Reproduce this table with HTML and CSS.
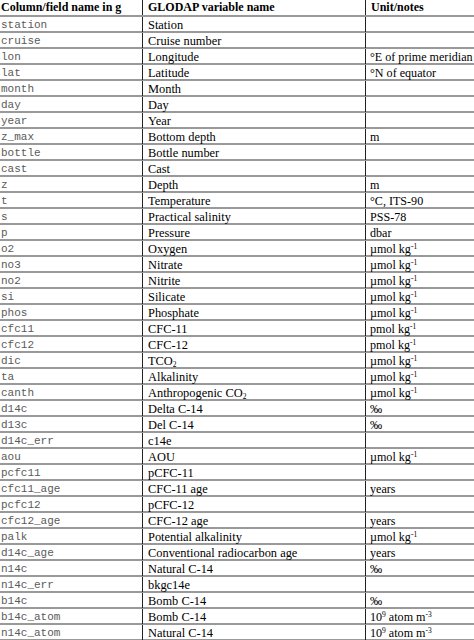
FILE: index.html
```html
<!DOCTYPE html>
<html>
<head>
<meta charset="utf-8">
<link rel="stylesheet" href="styles.css">
</head>
<body>
<div class="table">
  <div class="row head"><div class="c1">Column/field name in g</div><div class="c2">GLODAP variable name</div><div class="c3">Unit/notes</div></div>
  <div class="row"><div class="c1">station</div><div class="c2">Station</div><div class="c3"></div></div>
  <div class="row"><div class="c1">cruise</div><div class="c2">Cruise number</div><div class="c3"></div></div>
  <div class="row"><div class="c1">lon</div><div class="c2">Longitude</div><div class="c3">°E of prime meridian</div></div>
  <div class="row"><div class="c1">lat</div><div class="c2">Latitude</div><div class="c3">°N of equator</div></div>
  <div class="row"><div class="c1">month</div><div class="c2">Month</div><div class="c3"></div></div>
  <div class="row"><div class="c1">day</div><div class="c2">Day</div><div class="c3"></div></div>
  <div class="row"><div class="c1">year</div><div class="c2">Year</div><div class="c3"></div></div>
  <div class="row"><div class="c1">z_max</div><div class="c2">Bottom depth</div><div class="c3">m</div></div>
  <div class="row"><div class="c1">bottle</div><div class="c2">Bottle number</div><div class="c3"></div></div>
  <div class="row"><div class="c1">cast</div><div class="c2">Cast</div><div class="c3"></div></div>
  <div class="row"><div class="c1">z</div><div class="c2">Depth</div><div class="c3">m</div></div>
  <div class="row"><div class="c1">t</div><div class="c2">Temperature</div><div class="c3">°C, ITS-90</div></div>
  <div class="row"><div class="c1">s</div><div class="c2">Practical salinity</div><div class="c3">PSS-78</div></div>
  <div class="row"><div class="c1">p</div><div class="c2">Pressure</div><div class="c3">dbar</div></div>
  <div class="row"><div class="c1">o2</div><div class="c2">Oxygen</div><div class="c3">µmol kg<sup>-1</sup></div></div>
  <div class="row"><div class="c1">no3</div><div class="c2">Nitrate</div><div class="c3">µmol kg<sup>-1</sup></div></div>
  <div class="row"><div class="c1">no2</div><div class="c2">Nitrite</div><div class="c3">µmol kg<sup>-1</sup></div></div>
  <div class="row"><div class="c1">si</div><div class="c2">Silicate</div><div class="c3">µmol kg<sup>-1</sup></div></div>
  <div class="row"><div class="c1">phos</div><div class="c2">Phosphate</div><div class="c3">µmol kg<sup>-1</sup></div></div>
  <div class="row"><div class="c1">cfc11</div><div class="c2">CFC-11</div><div class="c3">pmol kg<sup>-1</sup></div></div>
  <div class="row"><div class="c1">cfc12</div><div class="c2">CFC-12</div><div class="c3">pmol kg<sup>-1</sup></div></div>
  <div class="row"><div class="c1">dic</div><div class="c2">TCO<sub>2</sub></div><div class="c3">µmol kg<sup>-1</sup></div></div>
  <div class="row"><div class="c1">ta</div><div class="c2">Alkalinity</div><div class="c3">µmol kg<sup>-1</sup></div></div>
  <div class="row"><div class="c1">canth</div><div class="c2">Anthropogenic CO<sub>2</sub></div><div class="c3">µmol kg<sup>-1</sup></div></div>
  <div class="row"><div class="c1">d14c</div><div class="c2">Delta C-14</div><div class="c3">‰</div></div>
  <div class="row"><div class="c1">d13c</div><div class="c2">Del C-14</div><div class="c3">‰</div></div>
  <div class="row"><div class="c1">d14c_err</div><div class="c2">c14e</div><div class="c3"></div></div>
  <div class="row"><div class="c1">aou</div><div class="c2">AOU</div><div class="c3">µmol kg<sup>-1</sup></div></div>
  <div class="row"><div class="c1">pcfc11</div><div class="c2">pCFC-11</div><div class="c3"></div></div>
  <div class="row"><div class="c1">cfc11_age</div><div class="c2">CFC-11 age</div><div class="c3">years</div></div>
  <div class="row"><div class="c1">pcfc12</div><div class="c2">pCFC-12</div><div class="c3"></div></div>
  <div class="row"><div class="c1">cfc12_age</div><div class="c2">CFC-12 age</div><div class="c3">years</div></div>
  <div class="row"><div class="c1">palk</div><div class="c2">Potential alkalinity</div><div class="c3">µmol kg<sup>-1</sup></div></div>
  <div class="row"><div class="c1">d14c_age</div><div class="c2">Conventional radiocarbon age</div><div class="c3">years</div></div>
  <div class="row"><div class="c1">n14c</div><div class="c2">Natural C-14</div><div class="c3">‰</div></div>
  <div class="row"><div class="c1">n14c_err</div><div class="c2">bkgc14e</div><div class="c3"></div></div>
  <div class="row"><div class="c1">b14c</div><div class="c2">Bomb C-14</div><div class="c3">‰</div></div>
  <div class="row"><div class="c1">b14c_atom</div><div class="c2">Bomb C-14</div><div class="c3">10<sup>9</sup> atom m<sup>-3</sup></div></div>
  <div class="row"><div class="c1">n14c_atom</div><div class="c2">Natural C-14</div><div class="c3">10<sup>9</sup> atom m<sup>-3</sup></div></div>
</div>
</body>
</html>
```
FILE: styles.css
```css
html, body {
  margin: 0;
  padding: 0;
  background: #fff;
  overflow: hidden;
}
.table {
  width: 474px;
  font-family: "Liberation Serif", "Times New Roman", serif;
  font-size: 12.4px;
  color: #000;
}
.row {
  display: grid;
  grid-template-columns: 142px 223px 1fr;
  height: 16px;
  box-sizing: border-box;
  border-bottom: 2px solid #999;
  line-height: 14px;
  white-space: nowrap;
}
.row > div {
  padding-top: 1px;
}
.row.head {
  height: 17px;
  font-weight: bold;
  font-size: 12px;
  line-height: 15px;
}
.row.head > div {
  padding-top: 0;
}
.c1 {
  padding-left: 1px;
  font-family: "Liberation Mono", "Courier New", monospace;
  font-size: 11px;
  color: #5a5a5a;
}
.head .c1 {
  font-family: "Liberation Serif", "Times New Roman", serif;
  font-size: 12px;
  color: #000;
}
.c2, .c3 {
  border-left: 1px solid #222;
  padding-left: 5px;
}
.c3 {
  padding-left: 4px;
  font-size: 12.1px;
}
.head .c3 {
  font-size: 12px;
  padding-left: 5px;
}
sup, sub {
  font-size: 7.5px;
  line-height: 0;
}
sup { vertical-align: 4px; }
sub { vertical-align: -2px; }
```
